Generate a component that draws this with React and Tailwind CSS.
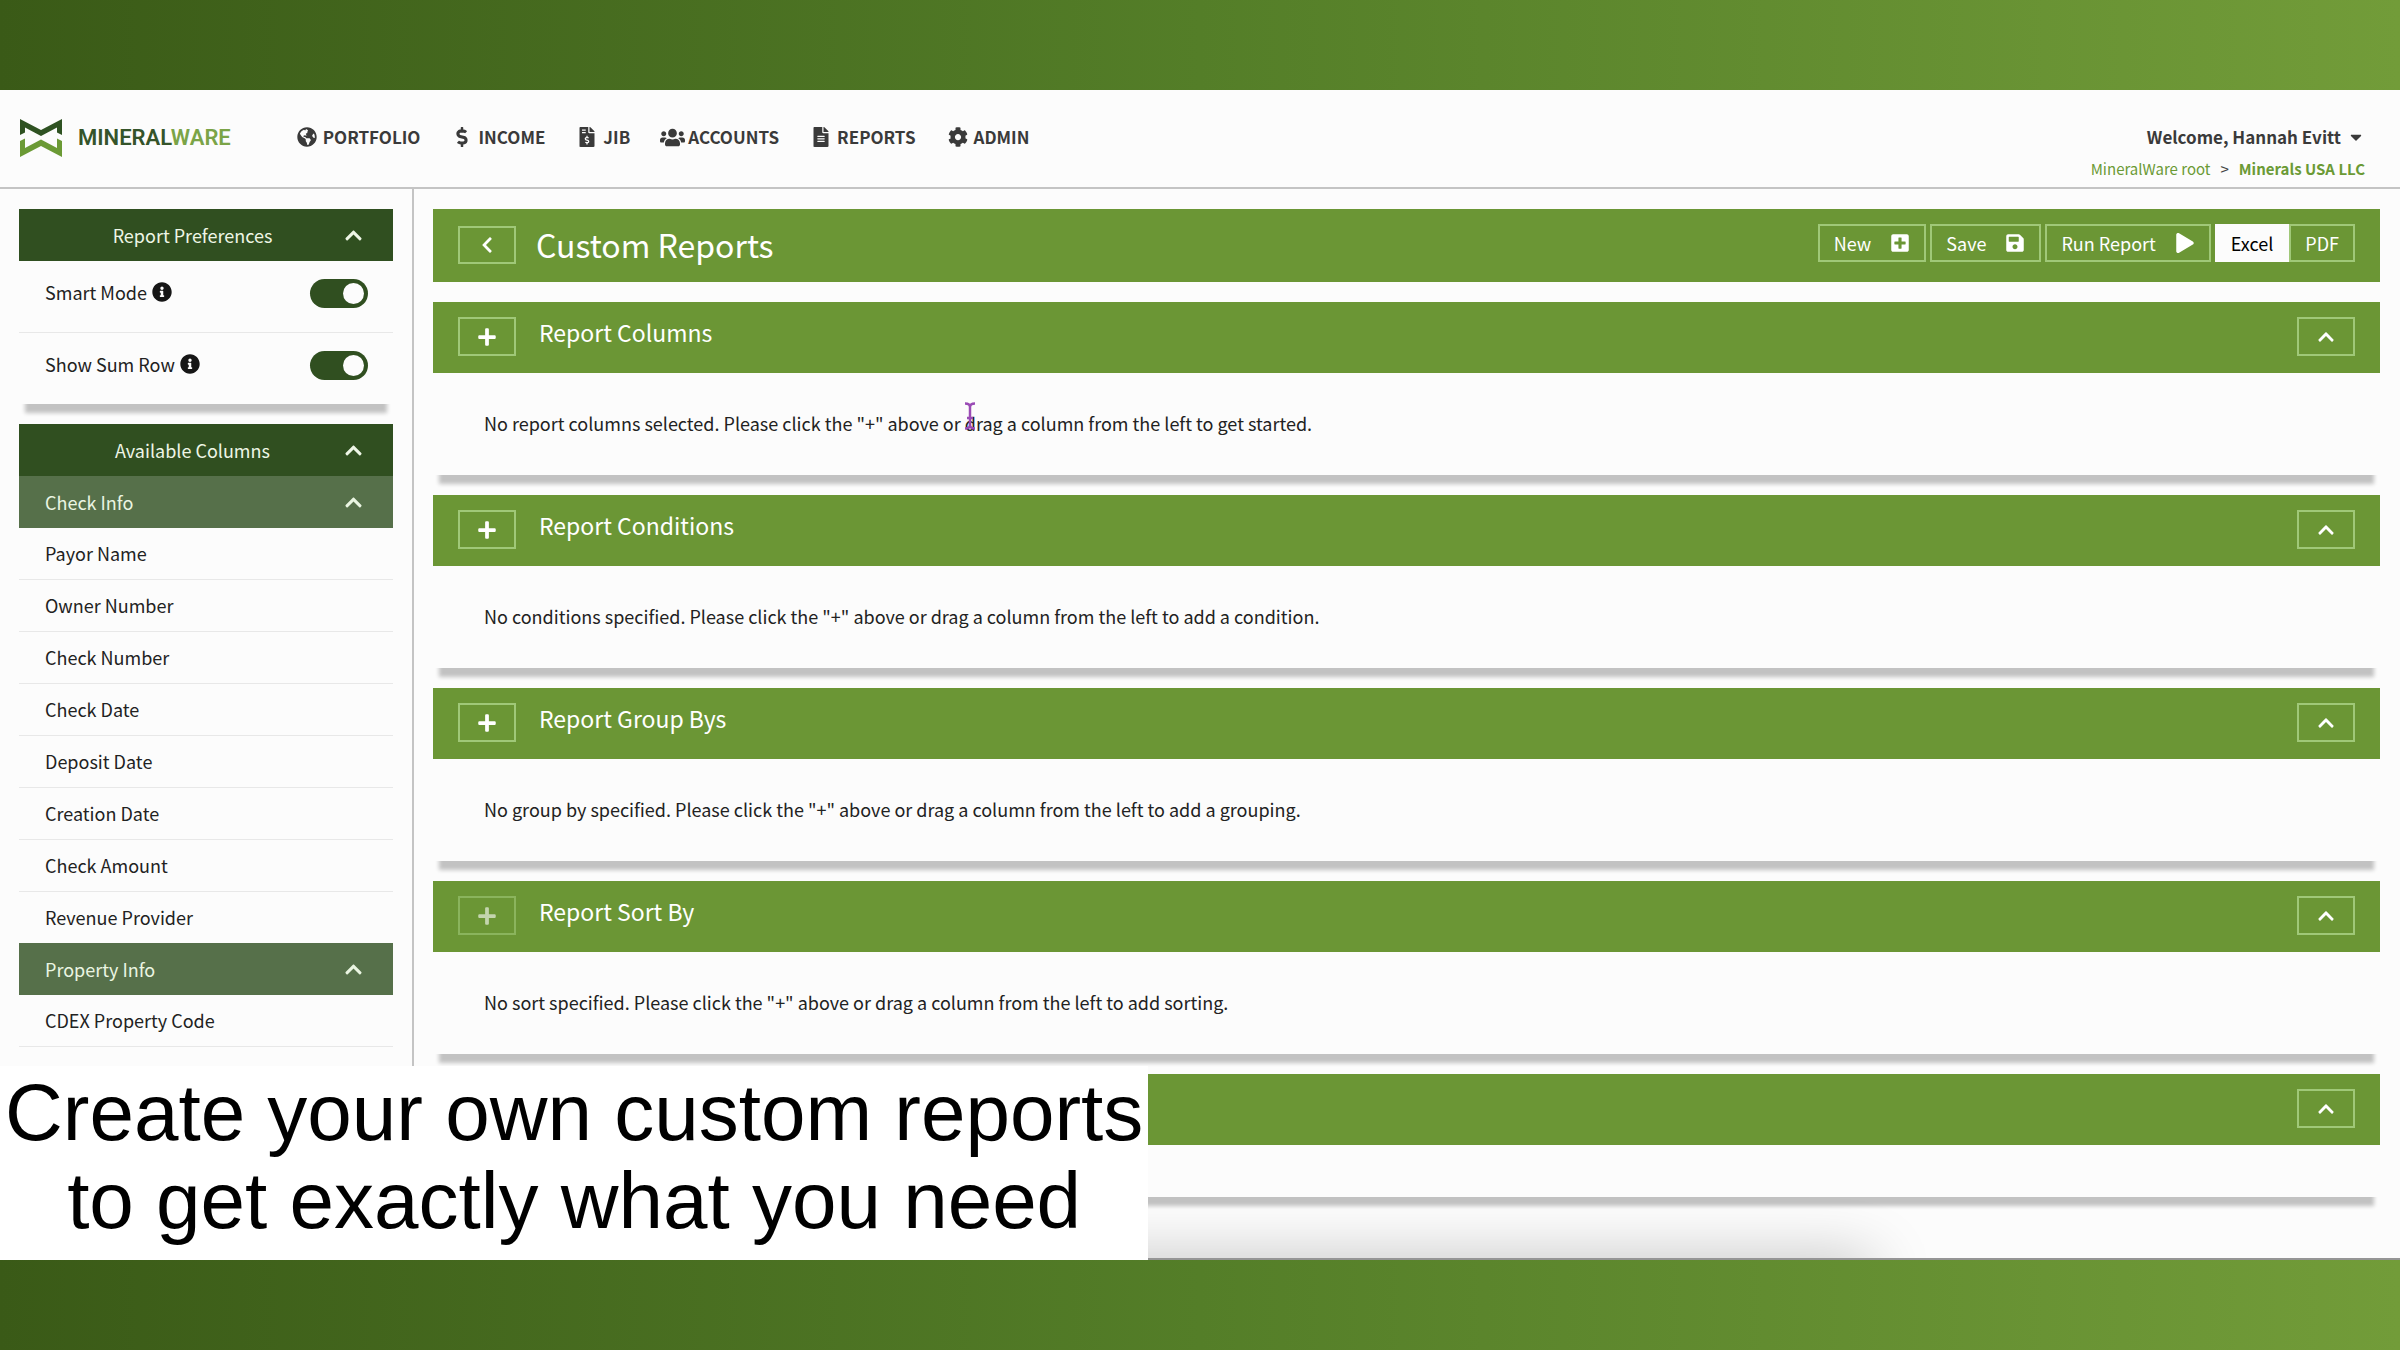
import React, { useState } from 'react';
import {
  FaCaretDown,
  FaChevronLeft,
  FaChevronUp,
  FaCog,
  FaDollarSign,
  FaFileAlt,
  FaFileInvoiceDollar,
  FaGlobeAmericas,
  FaInfoCircle,
  FaPlay,
  FaPlus,
  FaPlusSquare,
  FaSave,
  FaUsers,
} from 'react-icons/fa';

const navItems = [
  { label: 'PORTFOLIO', icon: FaGlobeAmericas },
  { label: 'INCOME', icon: FaDollarSign },
  { label: 'JIB', icon: FaFileInvoiceDollar },
  { label: 'ACCOUNTS', icon: FaUsers, size: 25 },
  { label: 'REPORTS', icon: FaFileAlt },
  { label: 'ADMIN', icon: FaCog },
];

const columnGroups = [
  {
    name: 'Check Info',
    columns: [
      'Payor Name',
      'Owner Number',
      'Check Number',
      'Check Date',
      'Deposit Date',
      'Creation Date',
      'Check Amount',
      'Revenue Provider',
    ],
  },
  {
    name: 'Property Info',
    columns: ['CDEX Property Code', 'Property Name'],
  },
];

const sections = [
  {
    title: 'Report Columns',
    text: 'No report columns selected. Please click the "+" above or drag a column from the left to get started.',
  },
  {
    title: 'Report Conditions',
    text: 'No conditions specified. Please click the "+" above or drag a column from the left to add a condition.',
  },
  {
    title: 'Report Group Bys',
    text: 'No group by specified. Please click the "+" above or drag a column from the left to add a grouping.',
  },
  {
    title: 'Report Sort By',
    text: 'No sort specified. Please click the "+" above or drag a column from the left to add sorting.',
    disabled: true,
  },
];

const Logo = () => (
  <a href="#" className="flex items-center gap-4">
    <svg width="42" height="38" viewBox="0 0 42 38" aria-hidden="true">
      <path d="M0 0L21 11L42 0V16L37 13.5V8.5L21 17L5 8.5V13.5L0 16Z" fill="#2f5222" />
      <path d="M0 38L21 27L42 38V22L37 19.5V29L21 20.5L5 29V19.5L0 22Z" fill="#6b9a35" />
    </svg>
    <span className="font-[Roboto,sans-serif] text-[22px] leading-6 font-semibold text-[#35542a]">
      MINERAL<span className="text-[#7ba447]">WARE</span>
    </span>
  </a>
);

const Toggle = ({ id, label }) => {
  const [on, setOn] = useState(true);

  return (
    <div className="flex items-start justify-between border-b border-[#e8e8e8] pt-[18px] pr-[25px] pb-6 pl-[26px] last:border-b-0">
      <label htmlFor={id} className="flex items-center gap-[5px] leading-[26px]">
        {label}
        <FaInfoCircle size={20} className="text-[#161616]" />
      </label>
      <input
        id={id}
        type="checkbox"
        role="switch"
        checked={on}
        onChange={() => setOn(!on)}
        className="flex h-[29px] w-[58px] appearance-none items-center rounded-full bg-[#304f20] px-1 before:size-[21px] before:rounded-full before:bg-[#fcfcfc] checked:justify-end"
      />
    </div>
  );
};

const PanelHeader = ({ title }) => (
  <button
    type="button"
    className="flex h-[52px] w-full items-center bg-[#304f20] pr-[30px] pl-[22px] text-[#eef6e6]"
  >
    <span className="flex-1 text-center">{title}</span>
    <FaChevronUp size={19} />
  </button>
);

const ColumnGroup = ({ name, columns }) => (
  <div>
    <button
      type="button"
      className="flex h-[52px] w-full items-center justify-between bg-[#56704a] pr-[30px] pl-[26px] text-[#eaf5e2]"
    >
      {name}
      <FaChevronUp size={19} />
    </button>
    <ul className="divide-y divide-[#e8e8e8]">
      {columns.map((column) => (
        <li key={column} className="box-content flex h-[49px] items-center pb-0.5 pl-[26px]">
          {column}
        </li>
      ))}
    </ul>
  </div>
);

const ToolButton = ({ label, icon: Icon }) => (
  <button
    type="button"
    className="flex h-[38px] items-center gap-[19px] border-2 border-[#a0c878] px-3.5 leading-[30px]"
  >
    {label}
    <Icon size={20} />
  </button>
);

const Section = ({ title, text, disabled }) => (
  <section className="bg-[#fcfcfc] shadow-[0_15px_4px_-6px_#c2c2c2]">
    <div className="flex h-[71px] items-start justify-end bg-[#6b9635] px-[25px] pt-[15px] text-white">
      {title && (
        <>
          <button
            type="button"
            aria-label={`Add to ${title}`}
            disabled={disabled}
            className="flex h-[39px] w-[58px] items-center justify-center border-2 border-[#a0c878] disabled:opacity-60"
          >
            <FaPlus size={20} />
          </button>
          <h2 className="flex-1 pl-[23px] text-[23px] leading-[30px]">{title}</h2>
        </>
      )}
      <button
        type="button"
        aria-label="Collapse"
        className="flex h-[39px] w-[58px] items-center justify-center border-2 border-[#a0c878]"
      >
        <FaChevronUp size={18} />
      </button>
    </div>
    {text ? <p className="pt-[37px] pb-[39px] pl-[51px] leading-[26px]">{text}</p> : <div className="h-[52px]" />}
  </section>
);

const App = () => {
  const [format, setFormat] = useState('Excel');

  return (
    <div className="flex h-screen flex-col bg-linear-to-r from-[#3a5a17] via-[#547e28] to-[#729c39] py-[90px] font-['Noto_Sans_CJK_SC',sans-serif] text-lg text-[#222]">
      <div className="relative flex min-h-0 flex-1 flex-col overflow-hidden bg-[#fcfcfc]">
        <header className="flex items-start border-b-2 border-[#c4c4c4] pr-[35px] pl-5">
          <div className="flex h-24 items-center">
            <Logo />
          </div>
          <nav className="flex h-[97px] flex-1 items-start gap-[30px] pt-[34px] pl-16 text-[17px] leading-[26px] font-bold text-[#3a3a3a]">
            {navItems.map(({ label, icon: Icon, size = 20 }) => (
              <a key={label} href="#" className="flex items-center gap-1">
                <span className="flex w-6 justify-center">
                  <Icon size={size} className="shrink-0" />
                </span>
                {label}
              </a>
            ))}
          </nav>
          <div className="flex flex-col items-end pt-[34px]">
            <button type="button" className="flex items-center gap-1.5 text-[17px] leading-[26px] font-bold text-[#3a3a3a]">
              Welcome, Hannah Evitt
              <FaCaretDown size={18} />
            </button>
            <div className="flex gap-2.5 pt-[7px] text-[15px] leading-6 text-[#6b9a35]">
              <a href="#">MineralWare root</a>
              <span className="text-[#444]">&gt;</span>
              <a href="#" className="font-bold">
                Minerals USA LLC
              </a>
            </div>
          </div>
        </header>

        <div className="flex min-h-0 flex-1">
          <aside className="flex w-[414px] shrink-0 flex-col gap-5 border-r-2 border-[#c4c4c4] pt-5 pr-[19px] pl-[19px]">
            <div className="bg-[#fcfcfc] shadow-[0_15px_4px_-6px_#c2c2c2]">
              <PanelHeader title="Report Preferences" />
              <Toggle id="smart-mode" label="Smart Mode" />
              <Toggle id="show-sum-row" label="Show Sum Row" />
            </div>
            <div>
              <PanelHeader title="Available Columns" />
              {columnGroups.map((group) => (
                <ColumnGroup key={group.name} {...group} />
              ))}
            </div>
          </aside>

          <main className="flex flex-1 flex-col gap-5 pt-5 pr-5 pl-[19px]">
            <div className="flex items-start bg-[#6b9635] px-[25px] pt-[15px] pb-[18px] text-white">
              <button
                type="button"
                aria-label="Back"
                className="mt-0.5 flex h-[38px] w-[58px] items-center justify-center border-2 border-[#a0c878]"
              >
                <FaChevronLeft size={18} />
              </button>
              <h1 className="flex-1 pl-5 text-[32px] leading-[40px]">Custom Reports</h1>
              <div className="flex gap-1">
                <ToolButton label="New" icon={FaPlusSquare} />
                <ToolButton label="Save" icon={FaSave} />
                <ToolButton label="Run Report" icon={FaPlay} />
                <div className="flex">
                  {['Excel', 'PDF'].map((name) => (
                    <button
                      key={name}
                      type="button"
                      aria-pressed={format === name}
                      onClick={() => setFormat(name)}
                      className="h-[38px] border-2 border-[#a0c878] px-3.5 leading-[30px] aria-pressed:border-[#fcfcfc] aria-pressed:bg-[#fcfcfc] aria-pressed:text-black"
                    >
                      {name}
                    </button>
                  ))}
                </div>
              </div>
            </div>
            {sections.map((section) => (
              <Section key={section.title} {...section} />
            ))}
            <Section />
          </main>
        </div>
        <div className="relative z-10 h-0.5 shrink-0 bg-[#959595]" />

        {/* dock shadow */}
        <div className="absolute -bottom-10 left-0 h-10 w-[78%] shadow-[0_0_60px_rgba(0,0,0,0.28)]" />

        {/* mouse pointer */}
        <svg
          className="absolute top-[312px] left-[964px]"
          width="12"
          height="28"
          viewBox="0 0 12 28"
          fill="none"
          stroke="#9a4bb5"
          strokeWidth="2.5"
          aria-hidden="true"
        >
          <path d="M1 1.5C4 1.5 6 3 6 5C6 3 8 1.5 11 1.5M6 5V23M1 26.5C4 26.5 6 25 6 23C6 25 8 26.5 11 26.5M3 16H9" />
        </svg>

        <div className="absolute bottom-0 left-0 z-20 bg-white px-[5px] pt-[3px] pb-[15px] text-center font-['Liberation_Sans',sans-serif] text-[80px] leading-[88px] text-black">
          Create your own custom reports
          <br />
          to get exactly what you need
        </div>
      </div>
    </div>
  );
};

export default App;
